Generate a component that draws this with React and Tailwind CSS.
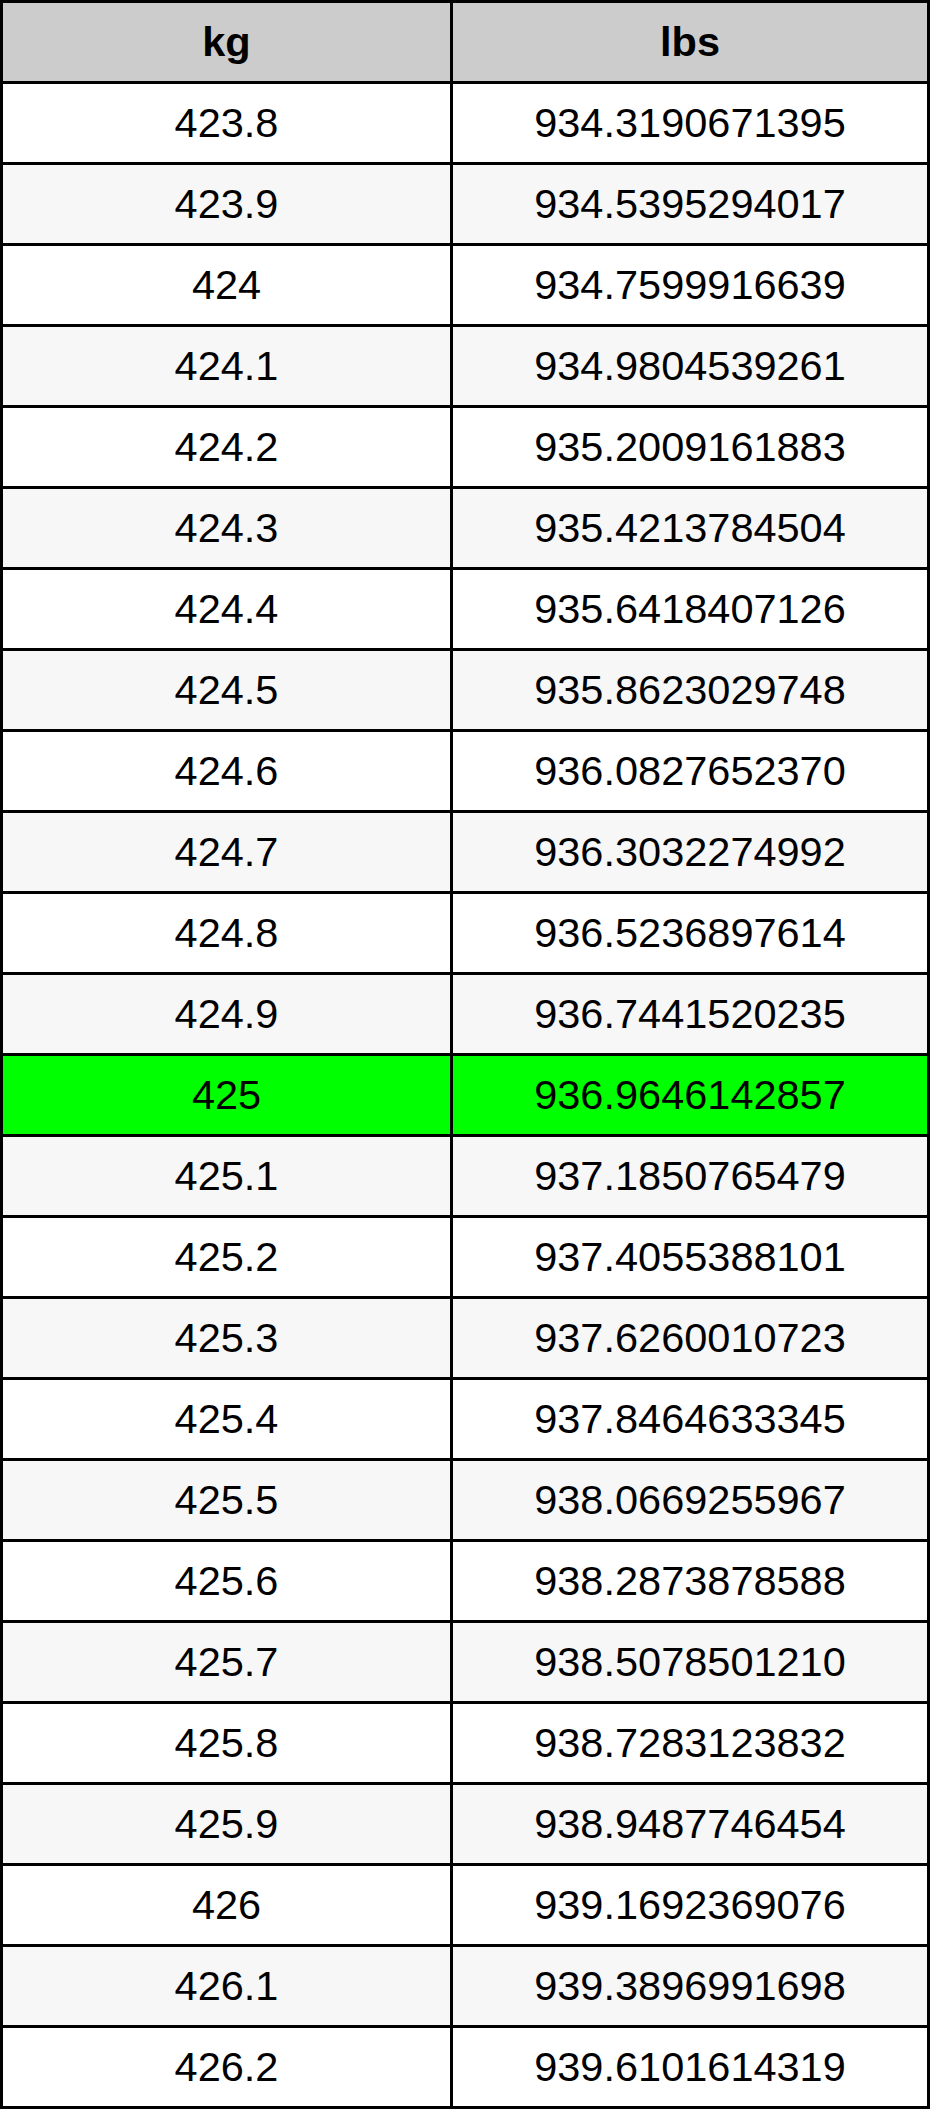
const rows = [
  ['423.8', '934.3190671395'],
  ['423.9', '934.5395294017'],
  ['424', '934.7599916639'],
  ['424.1', '934.9804539261'],
  ['424.2', '935.2009161883'],
  ['424.3', '935.4213784504'],
  ['424.4', '935.6418407126'],
  ['424.5', '935.8623029748'],
  ['424.6', '936.0827652370'],
  ['424.7', '936.3032274992'],
  ['424.8', '936.5236897614'],
  ['424.9', '936.7441520235'],
  ['425', '936.9646142857'],
  ['425.1', '937.1850765479'],
  ['425.2', '937.4055388101'],
  ['425.3', '937.6260010723'],
  ['425.4', '937.8464633345'],
  ['425.5', '938.0669255967'],
  ['425.6', '938.2873878588'],
  ['425.7', '938.5078501210'],
  ['425.8', '938.7283123832'],
  ['425.9', '938.9487746454'],
  ['426', '939.1692369076'],
  ['426.1', '939.3896991698'],
  ['426.2', '939.6101614319'],
];

function Cell({ children, className = '' }) {
  return (
    <div className={`h-[81px] flex items-center justify-center border-r-[3px] border-b-[3px] border-black ${className}`}>
      {children}
    </div>
  );
}

export default function App() {
  return (
    <div className="w-[930px] bg-white text-black font-['Liberation_Sans',Arial,sans-serif] text-[41.5px] leading-none">
      <div className="grid grid-cols-[450px_477px] border-l-[3px] border-t-[3px] border-black">
        <Cell className="bg-[#cccccc] font-bold">kg</Cell>
        <Cell className="bg-[#cccccc] font-bold">lbs</Cell>
        {rows.map(([kg, lbs], i) => {
          const bg = kg === '425' ? 'bg-[#00ff00]' : i % 2 === 0 ? 'bg-white' : 'bg-[#f7f7f7]';
          return [
            <Cell key={kg + 'a'} className={bg}>{kg}</Cell>,
            <Cell key={kg + 'b'} className={bg}>{lbs}</Cell>,
          ];
        })}
      </div>
    </div>
  );
}
